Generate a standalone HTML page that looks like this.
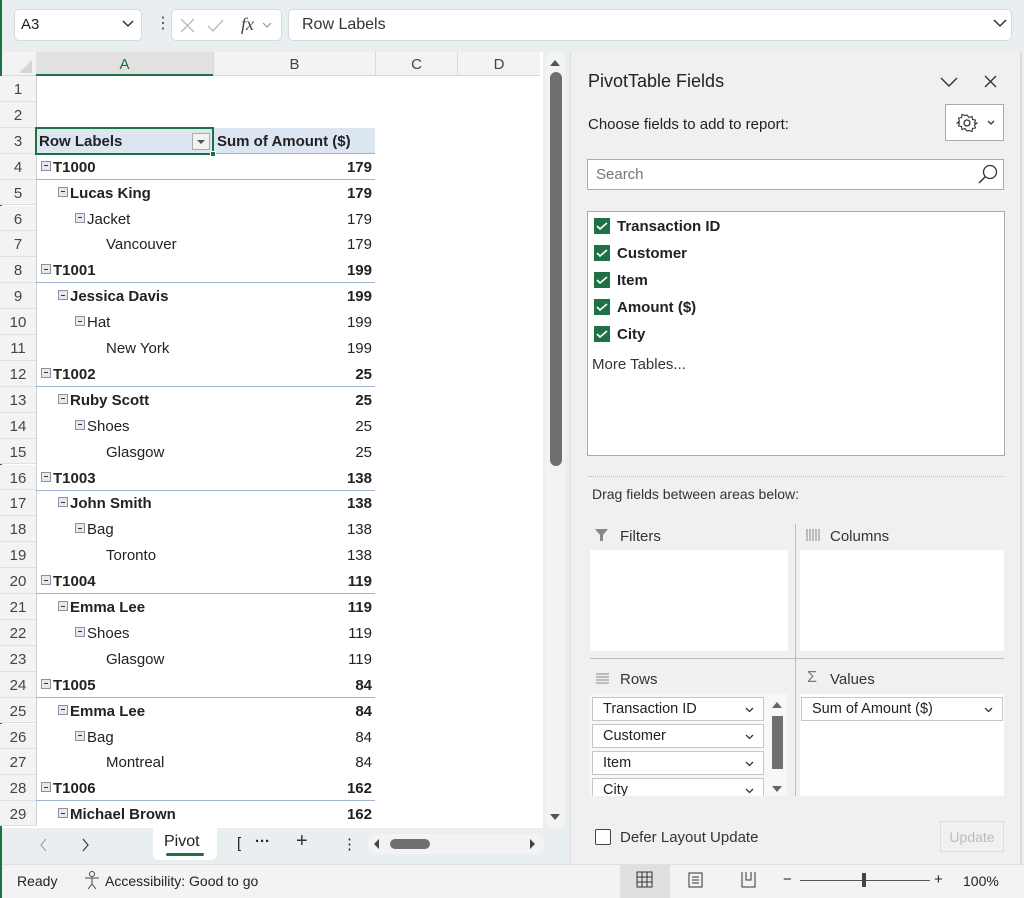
<!DOCTYPE html>
<html><head><meta charset="utf-8"><style>
*{box-sizing:border-box;margin:0;padding:0}
body{width:1024px;height:898px;overflow:hidden;background:#e9eef0;font-family:"Liberation Sans",sans-serif;position:relative;color:#222}
.a{position:absolute}
.box{background:#fff;border:1px solid #d6dadc;border-radius:5px}
.rh{position:absolute;left:0;width:36px;text-align:center;font-size:15px;color:#444;border-bottom:1px solid #e0e0e0;background:#f3f3f3}
.cell{position:absolute;font-size:15px;white-space:nowrap}
.b{font-weight:bold}
.mn{display:inline-block;width:10px;height:10px;border:1px solid #8a90a0;background:#e4e8ef;margin-right:2px;vertical-align:1px;position:relative}
.mn:after{content:"";position:absolute;left:2px;top:3.5px;width:4px;height:1px;background:#333}
.hl{position:absolute;left:36px;width:339px;height:1px;background:#9fb4d0}
.chk{position:absolute;left:594px;width:16px;height:16px;background:#1e7145}
.chk svg{position:absolute;left:2px;top:3px}
.fl{position:absolute;left:617px;font-size:15px;font-weight:bold;color:#222}
.dd{position:absolute;background:#fff;border:1px solid #c6c6c6;font-size:14.5px;padding:3px 0 0 10px;color:#222}
.dd svg{position:absolute;right:9px;top:9px}
</style></head><body>
<div class="a" style="left:0;top:0;width:2px;height:898px;background:#1e7145"></div>
<div class="a box" style="left:14px;top:9px;width:128px;height:32px"></div>
<div class="a" style="left:21px;top:16px;font-size:15px">A3</div>
<svg class="a" style="left:122px;top:19px" width="12" height="10"><path d="M1 2l5 5 5-5" stroke="#333" fill="none" stroke-width="1.5"/></svg>
<div class="a" style="left:155px;top:13px;font-size:16px;color:#444">⋮</div>
<div class="a box" style="left:171px;top:9px;width:111px;height:32px"></div>
<svg class="a" style="left:178px;top:16px" width="100" height="18"><path d="M3 3l13 13M16 3L3 16" stroke="#bbb" stroke-width="1.4"/><path d="M30 10l5 5 10-11" stroke="#bbb" fill="none" stroke-width="1.4"/><text x="63" y="14" font-family="Liberation Serif" font-style="italic" font-size="18" fill="#444">fx</text><path d="M85 7l4 4 4-4" stroke="#999" fill="none" stroke-width="1.2"/></svg>
<div class="a box" style="left:288px;top:9px;width:724px;height:32px"></div>
<div class="a" style="left:302px;top:16px;font-size:16px;color:#333">Row Labels</div>
<svg class="a" style="left:993px;top:18px" width="14" height="10"><path d="M1 2l6 6 6-6" stroke="#333" fill="none" stroke-width="1.5"/></svg>
<div class="a" style="left:2px;top:52px;width:541px;height:776px;background:#fff"></div>
<div class="a" style="left:2px;top:52px;width:538px;height:24px;background:#f3f3f3;border-bottom:1px solid #d8d8d8"></div>
<svg class="a" style="left:16px;top:58px" width="18" height="16"><path d="M16 2V15H3z" fill="#d6d6d6"/></svg>
<div class="a" style="left:36px;top:52px;width:177px;height:24px;background:#e1e1e1;border-bottom:2px solid #1e7145;text-align:center;font-size:15px;padding-top:4px;color:#1e6b3f">A</div>
<div class="a" style="left:213px;top:52px;width:162px;height:24px;border-left:1px solid #d8d8d8;text-align:center;font-size:15px;padding-top:4px;color:#444">B</div>
<div class="a" style="left:375px;top:52px;width:82px;height:24px;border-left:1px solid #d8d8d8;text-align:center;font-size:15px;padding-top:4px;color:#444">C</div>
<div class="a" style="left:457px;top:52px;width:83px;height:24px;border-left:1px solid #d8d8d8;text-align:center;font-size:15px;padding-top:4px;color:#444">D</div>
<div class="a" style="left:36px;top:76px;width:1px;height:750px;background:#d0d0d0"></div>
<div id="rows"></div>
<div class="a" style="left:36px;top:128px;width:339px;height:26px;background:#dce6f1;border-bottom:1px solid #9fb4d0"></div>
<div class="a" style="left:35px;top:127px;width:179px;height:28px;border:2px solid #1e7145"></div>
<div class="a" style="left:210px;top:151px;width:6px;height:6px;background:#1e7145;border:1px solid #fff"></div>
<div class="a" style="left:192px;top:133px;width:18px;height:17px;background:#f2f2f2;border:1px solid #aaa"></div>
<svg class="a" style="left:196px;top:139px" width="10" height="6"><path d="M1 1h8L5 5z" fill="#555"/></svg>
<div class="cell b" style="left:39px;top:133px">Row Labels</div>
<div class="cell b" style="left:217px;top:133px">Sum of Amount ($)</div>
<div class="a" style="left:545px;top:52px;width:20px;height:776px;background:#f3f3f3;border-radius:8px"></div>
<svg class="a" style="left:549px;top:58px" width="12" height="10"><path d="M1 8h10L6 2z" fill="#555"/></svg>
<div class="a" style="left:550px;top:72px;width:12px;height:394px;background:#6f6f6f;border-radius:6px"></div>
<svg class="a" style="left:549px;top:812px" width="12" height="10"><path d="M1 2h10L6 8z" fill="#555"/></svg>
<svg class="a" style="left:38px;top:837px" width="60" height="16"><path d="M8 2L3 8l5 6" stroke="#aaa" fill="none" stroke-width="1.3"/><path d="M45 2l5 6-5 6" stroke="#444" fill="none" stroke-width="1.3"/></svg>
<div class="a" style="left:153px;top:826px;width:64px;height:34px;background:#fff;border-radius:0 0 6px 6px"></div>
<div class="a" style="left:164px;top:833px;font-size:16px">Pivot</div>
<div class="a" style="left:166px;top:853px;width:38px;height:3px;background:#1e7145;border-radius:2px"></div>
<div class="a" style="left:237px;top:835px;font-size:15px">[</div>
<div class="a" style="left:255px;top:833px;font-size:15px;font-weight:bold">···</div>
<div class="a" style="left:296px;top:830px;font-size:20px;color:#333">+</div>
<div class="a" style="left:342px;top:835px;font-size:15px">⋮</div>
<div class="a" style="left:368px;top:834px;width:176px;height:20px;background:#f3f3f3;border-radius:10px"></div>
<svg class="a" style="left:372px;top:838px" width="170" height="12"><path d="M7 1v10L2 6z" fill="#444"/><rect x="18" y="1" width="40" height="10" rx="5" fill="#6f6f6f"/><path d="M158 1v10l5-5z" fill="#444"/></svg>
<div class="a" style="left:2px;top:864px;width:1022px;height:34px;background:#f3f3f3;border-top:1px solid #e0e0e0"></div>
<div class="a" style="left:17px;top:873px;font-size:14px">Ready</div>
<svg class="a" style="left:82px;top:870px" width="20" height="20"><circle cx="10" cy="4" r="2.5" fill="none" stroke="#444"/><path d="M3 8h14M10 8v6l-4 5M10 14l4 5" stroke="#444" fill="none"/></svg>
<div class="a" style="left:105px;top:873px;font-size:14px">Accessibility: Good to go</div>
<div class="a" style="left:620px;top:864px;width:50px;height:34px;background:#e0e0e0"></div>
<svg class="a" style="left:636px;top:871px" width="120" height="18"><path d="M1 1h15v15H1zM6 1v15M11 1v15M1 6h15M1 11h15" stroke="#333" fill="none"/><path d="M53 2h13v14H53zM56 6h7M56 9h7M56 12h7" stroke="#333" fill="none"/><path d="M106 1v15h13V1M110 1v8h5V1" stroke="#333" fill="none"/></svg>
<div class="a" style="left:783px;top:871px;font-size:15px">−</div>
<div class="a" style="left:800px;top:880px;width:130px;height:1px;background:#555"></div>
<div class="a" style="left:862px;top:873px;width:4px;height:14px;background:#444"></div>
<div class="a" style="left:934px;top:871px;font-size:15px">+</div>
<div class="a" style="left:963px;top:873px;font-size:14px">100%</div>
<div class="a" style="left:570px;top:52px;width:454px;height:812px;background:#f0f0f0;border-left:1px solid #dcdcdc"></div>
<div class="a" style="left:588px;top:71px;font-size:18px;color:#222">PivotTable Fields</div>
<svg class="a" style="left:940px;top:74px" width="60" height="16"><path d="M1 4l8 8 8-8" stroke="#333" fill="none" stroke-width="1.4"/><path d="M45 2l11 11M56 2L45 13" stroke="#333" stroke-width="1.4"/></svg>
<div class="a" style="left:588px;top:116px;font-size:15px;color:#222">Choose fields to add to report:</div>
<div class="a" style="left:945px;top:104px;width:59px;height:37px;background:#fff;border:1px solid #aaa"></div>
<svg class="a" style="left:956px;top:112px" width="42" height="22"><circle cx="11" cy="11" r="3" stroke="#333" fill="none" stroke-width="1.3"/><path d="M11 3l2 2.5 3-1 .5 3 3 .5-1 3L21 11l-2.5 2 1 3-3 .5-.5 3-3-1L11 19l-2-2.5-3 1-.5-3-3-.5 1-3L1 11l2.5-2-1-3 3-.5.5-3 3 1z" stroke="#333" fill="none" stroke-width="1.1"/><path d="M32 9l3 3 3-3" stroke="#333" fill="none" stroke-width="1.3"/></svg>
<div class="a" style="left:587px;top:159px;width:417px;height:31px;background:#fff;border:1px solid #aaa"></div>
<div class="a" style="left:596px;top:166px;font-size:15px;color:#777">Search</div>
<svg class="a" style="left:976px;top:163px" width="24" height="24"><circle cx="14" cy="9" r="6.5" stroke="#333" fill="none" stroke-width="1.3"/><path d="M9.5 13.5L3 20" stroke="#333" stroke-width="1.5"/></svg>
<div class="a" style="left:587px;top:211px;width:418px;height:245px;background:#fff;border:1px solid #aaa"></div>
<div class="chk" style="top:218px"><svg width="12" height="10"><path d="M1 5l3 3 7-6" stroke="#fff" fill="none" stroke-width="1.6"/></svg></div><div class="fl" style="top:218px">Transaction ID</div>
<div class="chk" style="top:245px"><svg width="12" height="10"><path d="M1 5l3 3 7-6" stroke="#fff" fill="none" stroke-width="1.6"/></svg></div><div class="fl" style="top:245px">Customer</div>
<div class="chk" style="top:272px"><svg width="12" height="10"><path d="M1 5l3 3 7-6" stroke="#fff" fill="none" stroke-width="1.6"/></svg></div><div class="fl" style="top:272px">Item</div>
<div class="chk" style="top:299px"><svg width="12" height="10"><path d="M1 5l3 3 7-6" stroke="#fff" fill="none" stroke-width="1.6"/></svg></div><div class="fl" style="top:299px">Amount ($)</div>
<div class="chk" style="top:326px"><svg width="12" height="10"><path d="M1 5l3 3 7-6" stroke="#fff" fill="none" stroke-width="1.6"/></svg></div><div class="fl" style="top:326px">City</div>
<div class="a" style="left:592px;top:356px;font-size:15px;color:#333">More Tables...</div>
<div class="a" style="left:588px;top:476px;width:416px;border-top:1px dotted #bbb"></div>
<div class="a" style="left:592px;top:486px;font-size:14px;color:#333">Drag fields between areas below:</div>
<svg class="a" style="left:595px;top:528px" width="14" height="14"><path d="M0 1h13L8 7v6H5V7z" fill="#888"/></svg>
<div class="a" style="left:620px;top:528px;font-size:15px;color:#333">Filters</div>
<svg class="a" style="left:806px;top:529px" width="14" height="12"><path d="M1 0v12M4 0v12M7 0v12M10 0v12M13 0v12" stroke="#888"/></svg>
<div class="a" style="left:830px;top:528px;font-size:15px;color:#333">Columns</div>
<div class="a" style="left:590px;top:550px;width:198px;height:101px;background:#fff"></div>
<div class="a" style="left:800px;top:550px;width:204px;height:101px;background:#fff"></div>
<div class="a" style="left:795px;top:524px;width:1px;height:272px;background:#bbb"></div>
<div class="a" style="left:590px;top:658px;width:414px;height:1px;background:#bbb"></div>
<svg class="a" style="left:596px;top:673px" width="14" height="12"><path d="M0 1h13M0 4h13M0 7h13M0 10h13" stroke="#888"/></svg>
<div class="a" style="left:620px;top:671px;font-size:15px;color:#333">Rows</div>
<div class="a" style="left:807px;top:669px;font-size:16px;color:#777">Σ</div>
<div class="a" style="left:830px;top:671px;font-size:15px;color:#333">Values</div>
<div class="a" style="left:590px;top:694px;width:197px;height:102px;background:#f7f7f7;overflow:hidden">
 <div class="dd" style="left:2px;top:3px;width:172px;height:24px">Transaction ID<svg width="9" height="6"><path d="M1 1l3.5 3.5L8 1" stroke="#333" fill="none" stroke-width="1.3"/></svg></div>
 <div class="dd" style="left:2px;top:30px;width:172px;height:24px">Customer<svg width="9" height="6"><path d="M1 1l3.5 3.5L8 1" stroke="#333" fill="none" stroke-width="1.3"/></svg></div>
 <div class="dd" style="left:2px;top:57px;width:172px;height:24px">Item<svg width="9" height="6"><path d="M1 1l3.5 3.5L8 1" stroke="#333" fill="none" stroke-width="1.3"/></svg></div>
 <div class="dd" style="left:2px;top:84px;width:172px;height:24px">City<svg width="9" height="6"><path d="M1 1l3.5 3.5L8 1" stroke="#333" fill="none" stroke-width="1.3"/></svg></div>
 <svg class="a" style="left:180px;top:6px" width="14" height="96"><path d="M2 8h10L7 2z" fill="#666"/><rect x="2" y="16" width="11" height="53" fill="#6f6f6f"/><path d="M2 86h10L7 92z" fill="#666"/></svg>
</div>
<div class="a" style="left:800px;top:694px;width:204px;height:102px;background:#fff"></div>
<div class="dd" style="left:801px;top:697px;width:202px;height:24px">Sum of Amount ($)<svg width="9" height="6"><path d="M1 1l3.5 3.5L8 1" stroke="#333" fill="none" stroke-width="1.3"/></svg></div>
<div class="a" style="left:595px;top:829px;width:16px;height:16px;background:#fff;border:1px solid #444;border-radius:2px"></div>
<div class="a" style="left:620px;top:829px;font-size:15px;color:#333">Defer Layout Update</div>
<div class="a" style="left:940px;top:821px;width:64px;height:31px;border:1px solid #ddd;font-size:14px;color:#bbb;text-align:center;padding-top:7px">Update</div>
<div class="a" style="left:1020px;top:52px;width:2px;height:812px;background:#dcdcdc"></div>
<script>
var d=[["",""],["",""],null,
[1,"T1000","179",1],[2,"Lucas King","179",0],[3,"Jacket","179",0],[4,"Vancouver","179",0],
[1,"T1001","199",1],[2,"Jessica Davis","199",0],[3,"Hat","199",0],[4,"New York","199",0],
[1,"T1002","25",1],[2,"Ruby Scott","25",0],[3,"Shoes","25",0],[4,"Glasgow","25",0],
[1,"T1003","138",1],[2,"John Smith","138",0],[3,"Bag","138",0],[4,"Toronto","138",0],
[1,"T1004","119",1],[2,"Emma Lee","119",0],[3,"Shoes","119",0],[4,"Glasgow","119",0],
[1,"T1005","84",1],[2,"Emma Lee","84",0],[3,"Bag","84",0],[4,"Montreal","84",0],
[1,"T1006","162",1],[2,"Michael Brown","162",0]];
var h="";
for(var i=0;i<29;i++){var t=76+i*25.9;var hh=(i==28)?826-t:25.9;
h+='<div class="rh" style="top:'+t+'px;height:'+hh+'px;line-height:27px">'+(i+1)+'</div>';
var r=d[i];if(!r||r[0]==="")continue;var lv=r[0];var bold=lv<=2?" b":"";
var x=[0,41,58,75,106][lv];var mn=lv<4?'<span class="mn"></span>':'';
h+='<div class="cell'+bold+'" style="left:'+x+'px;top:'+(t+5)+'px">'+mn+r[1]+'</div>';
h+='<div class="cell'+bold+'" style="left:213px;width:159px;text-align:right;top:'+(t+5)+'px">'+r[2]+'</div>';
if(r[3])h+='<div class="hl" style="top:'+(t+25)+'px"></div>';}
document.getElementById("rows").innerHTML=h;
</script>
</body></html>
